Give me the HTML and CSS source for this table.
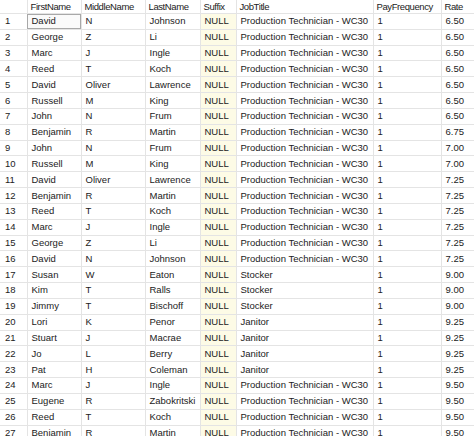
FILE: index.html
```html
<!DOCTYPE html>
<html>
<head>
<meta charset="utf-8">
<link rel="stylesheet" href="styles.css">
</head>
<body>
<table class="grid">
<colgroup>
<col class="c-num"><col class="c-first"><col class="c-mid"><col class="c-last"><col class="c-suf"><col class="c-job"><col class="c-pay"><col class="c-rate">
</colgroup>
<thead>
<tr><th></th><th>FirstName</th><th>MiddleName</th><th>LastName</th><th>Suffix</th><th>JobTitle</th><th>PayFrequency</th><th>Rate</th></tr>
</thead>
<tbody>
<tr><td class="num">1</td><td class="sel">David</td><td>N</td><td>Johnson</td><td class="null">NULL</td><td>Production Technician - WC30</td><td>1</td><td>6.50</td></tr>
<tr><td class="num">2</td><td>George</td><td>Z</td><td>Li</td><td class="null">NULL</td><td>Production Technician - WC30</td><td>1</td><td>6.50</td></tr>
<tr><td class="num">3</td><td>Marc</td><td>J</td><td>Ingle</td><td class="null">NULL</td><td>Production Technician - WC30</td><td>1</td><td>6.50</td></tr>
<tr><td class="num">4</td><td>Reed</td><td>T</td><td>Koch</td><td class="null">NULL</td><td>Production Technician - WC30</td><td>1</td><td>6.50</td></tr>
<tr><td class="num">5</td><td>David</td><td>Oliver</td><td>Lawrence</td><td class="null">NULL</td><td>Production Technician - WC30</td><td>1</td><td>6.50</td></tr>
<tr><td class="num">6</td><td>Russell</td><td>M</td><td>King</td><td class="null">NULL</td><td>Production Technician - WC30</td><td>1</td><td>6.50</td></tr>
<tr><td class="num">7</td><td>John</td><td>N</td><td>Frum</td><td class="null">NULL</td><td>Production Technician - WC30</td><td>1</td><td>6.50</td></tr>
<tr><td class="num">8</td><td>Benjamin</td><td>R</td><td>Martin</td><td class="null">NULL</td><td>Production Technician - WC30</td><td>1</td><td>6.75</td></tr>
<tr><td class="num">9</td><td>John</td><td>N</td><td>Frum</td><td class="null">NULL</td><td>Production Technician - WC30</td><td>1</td><td>7.00</td></tr>
<tr><td class="num">10</td><td>Russell</td><td>M</td><td>King</td><td class="null">NULL</td><td>Production Technician - WC30</td><td>1</td><td>7.00</td></tr>
<tr><td class="num">11</td><td>David</td><td>Oliver</td><td>Lawrence</td><td class="null">NULL</td><td>Production Technician - WC30</td><td>1</td><td>7.25</td></tr>
<tr><td class="num">12</td><td>Benjamin</td><td>R</td><td>Martin</td><td class="null">NULL</td><td>Production Technician - WC30</td><td>1</td><td>7.25</td></tr>
<tr><td class="num">13</td><td>Reed</td><td>T</td><td>Koch</td><td class="null">NULL</td><td>Production Technician - WC30</td><td>1</td><td>7.25</td></tr>
<tr><td class="num">14</td><td>Marc</td><td>J</td><td>Ingle</td><td class="null">NULL</td><td>Production Technician - WC30</td><td>1</td><td>7.25</td></tr>
<tr><td class="num">15</td><td>George</td><td>Z</td><td>Li</td><td class="null">NULL</td><td>Production Technician - WC30</td><td>1</td><td>7.25</td></tr>
<tr><td class="num">16</td><td>David</td><td>N</td><td>Johnson</td><td class="null">NULL</td><td>Production Technician - WC30</td><td>1</td><td>7.25</td></tr>
<tr><td class="num">17</td><td>Susan</td><td>W</td><td>Eaton</td><td class="null">NULL</td><td>Stocker</td><td>1</td><td>9.00</td></tr>
<tr><td class="num">18</td><td>Kim</td><td>T</td><td>Ralls</td><td class="null">NULL</td><td>Stocker</td><td>1</td><td>9.00</td></tr>
<tr><td class="num">19</td><td>Jimmy</td><td>T</td><td>Bischoff</td><td class="null">NULL</td><td>Stocker</td><td>1</td><td>9.00</td></tr>
<tr><td class="num">20</td><td>Lori</td><td>K</td><td>Penor</td><td class="null">NULL</td><td>Janitor</td><td>1</td><td>9.25</td></tr>
<tr><td class="num">21</td><td>Stuart</td><td>J</td><td>Macrae</td><td class="null">NULL</td><td>Janitor</td><td>1</td><td>9.25</td></tr>
<tr><td class="num">22</td><td>Jo</td><td>L</td><td>Berry</td><td class="null">NULL</td><td>Janitor</td><td>1</td><td>9.25</td></tr>
<tr><td class="num">23</td><td>Pat</td><td>H</td><td>Coleman</td><td class="null">NULL</td><td>Janitor</td><td>1</td><td>9.25</td></tr>
<tr><td class="num">24</td><td>Marc</td><td>J</td><td>Ingle</td><td class="null">NULL</td><td>Production Technician - WC30</td><td>1</td><td>9.50</td></tr>
<tr><td class="num">25</td><td>Eugene</td><td>R</td><td>Zabokritski</td><td class="null">NULL</td><td>Production Technician - WC30</td><td>1</td><td>9.50</td></tr>
<tr><td class="num">26</td><td>Reed</td><td>T</td><td>Koch</td><td class="null">NULL</td><td>Production Technician - WC30</td><td>1</td><td>9.50</td></tr>
<tr><td class="num">27</td><td>Benjamin</td><td>R</td><td>Martin</td><td class="null">NULL</td><td>Production Technician - WC30</td><td>1</td><td>9.50</td></tr>
</tbody>
</table>
</body>
</html>
```
FILE: styles.css
```css
html, body {
  margin: 0;
  padding: 0;
  background: #fff;
  overflow: hidden;
}
.grid {
  border-collapse: collapse;
  table-layout: fixed;
  width: 474px;
  font-family: "Liberation Sans", Arial, sans-serif;
  font-size: 9.5px;
  color: #222;
}
.c-num { width: 27px; }
.c-first { width: 54px; }
.c-mid { width: 64px; }
.c-last { width: 55px; }
.c-suf { width: 36px; }
.c-job { width: 137px; }
.c-pay { width: 68px; }
.c-rate { width: 33px; }
.grid th {
  height: 13px;
  padding: 0 0 0 3px;
  text-align: left;
  font-weight: normal;
  letter-spacing: -0.4px;
  border-right: 1px solid #e4e4e4;
  border-bottom: 1px solid #e4e4e4;
  white-space: nowrap;
  overflow: hidden;
  line-height: 12px;
}
.grid td {
  height: 14.84px;
  padding: 0 0 0 4px;
  border-right: 1px solid #e4e4e4;
  border-bottom: 1px solid #e4e4e4;
  white-space: nowrap;
  overflow: hidden;
  line-height: 14px;
}
.grid th:last-child,
.grid td:last-child {
  border-right: none;
}
.grid td.num {
  padding-left: 5px;
}
.grid td.null {
  background: #fdfbe6;
}
.grid td.sel {
  outline: 1px solid #a8a8a8;
  outline-offset: -1px;
  background: #fafafa;
}
```
